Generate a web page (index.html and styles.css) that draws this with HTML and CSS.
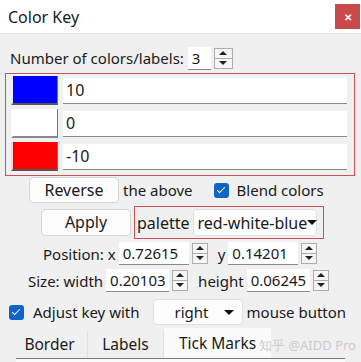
FILE: index.html
```html
<!DOCTYPE html>
<html lang="en">
<head>
    <meta charset="UTF-8">
    <title>Color Key</title>
    <link rel="stylesheet" href="styles.css">
</head>
<body>
    <div class="titlebar">
        <span class="title">Color Key</span>
        <span class="close">&#x2715;</span>
    </div>

    <div class="panel">
        <div class="row count-row">
            <span>Number of colors/labels:</span>
            <span class="spin">
                <span class="field narrow">3</span>
                <span class="arrows big"><i class="up"></i><i class="down"></i></span>
            </span>
        </div>

        <div class="colors">
            <div class="color-row">
                <span class="swatch blue"></span>
                <span class="label-field">10</span>
            </div>
            <div class="color-row">
                <span class="swatch white"></span>
                <span class="label-field">0</span>
            </div>
            <div class="color-row">
                <span class="swatch red"></span>
                <span class="label-field">-10</span>
            </div>
        </div>

        <div class="row reverse-row">
            <span class="button reverse">Reverse</span>
            <span>the above</span>
            <span class="check"></span>
            <span>Blend colors</span>
        </div>

        <div class="row apply-row">
            <span class="button apply">Apply</span>
            <span class="palette">
                <span>palette</span>
                <span class="combo palette-combo">red-white-blue<b class="caret"></b></span>
            </span>
        </div>

        <div class="row pos-row">
            <span>Position: x</span>
            <span class="spin">
                <span class="field">0.72615</span>
                <span class="arrows"><i class="up"></i><i class="down"></i></span>
            </span>
            <span class="gap-label">y</span>
            <span class="spin">
                <span class="field">0.14201</span>
                <span class="arrows"><i class="up"></i><i class="down"></i></span>
            </span>
        </div>

        <div class="row size-row">
            <span>Size: width</span>
            <span class="spin">
                <span class="field">0.20103</span>
                <span class="arrows"><i class="up"></i><i class="down"></i></span>
            </span>
            <span class="gap-label">height</span>
            <span class="spin">
                <span class="field">0.06245</span>
                <span class="arrows"><i class="up"></i><i class="down"></i></span>
            </span>
        </div>

        <div class="row adjust-row">
            <span class="check"></span>
            <span>Adjust key with</span>
            <span class="combo mouse-combo">right<b class="caret"></b></span>
            <span>mouse button</span>
        </div>

        <div class="tabs">
            <span class="tab">Border</span>
            <span class="tab">Labels</span>
            <span class="tab active">Tick Marks</span>
            <span class="watermark">知乎 @AIDD Pro</span>
        </div>
        <div class="tab-body"></div>
    </div>
</body>
</html>
```

FILE: styles.css
```css
body {
    margin: 0;
    width: 361px;
    height: 362px;
    overflow: hidden;
    background-color: #f0f0f0;
    font-family: "Noto Sans", "Open Sans", sans-serif;
    font-size: 15px;
    color: #1a1a1a;
}
.titlebar {
    height: 33px;
    background-color: #fff;
    border-bottom: 1px solid #e4e4e4;
    display: flex;
    align-items: center;
    justify-content: space-between;
    padding-left: 8px;
}
.title {
    font-size: 16px;
}
.close {
    width: 25px;
    height: 25px;
    margin-right: 1px;
    background-color: #c94a4b;
    color: #fff;
    font-size: 10px;
    font-weight: bold;
    display: flex;
    align-items: center;
    justify-content: center;
}
.panel {
    padding: 12px 6px 0 5px;
}
.row {
    display: flex;
    align-items: center;
    white-space: nowrap;
}
.count-row {
    height: 24px;
    padding-left: 5px;
    gap: 4px;
}
.spin {
    display: flex;
    align-items: center;
}
.field {
    background-color: #fff;
    border-bottom: 1px solid #8a8a8a;
    height: 22px;
    line-height: 22px;
    padding: 0 4px;
    width: 62px;
}
.field.narrow {
    width: 15px;
}
.arrows {
    display: flex;
    flex-direction: column;
    margin-left: 3px;
    border: 1px solid #adadad;
    background-color: #f5f5f5;
}
.arrows i {
    width: 14px;
    height: 9px;
    position: relative;
}
.arrows.big i {
    width: 17px;
}
.arrows i.up {
    border-bottom: 1px solid #adadad;
}
.arrows i::after {
    content: "";
    position: absolute;
    left: 3px;
    top: 2px;
    border-left: 4px solid transparent;
    border-right: 4px solid transparent;
}
.arrows.big i::after {
    left: 4px;
}
.arrows i.up::after {
    border-bottom: 4px solid #222;
}
.arrows i.down::after {
    border-top: 4px solid #222;
}
.colors {
    margin-top: 3px;
    border: 1px solid #d0505a;
    padding: 0 7px 2px 5px;
}
.color-row {
    display: flex;
    align-items: center;
    gap: 5px;
    height: 33px;
}
.swatch {
    width: 47px;
    height: 29px;
    box-sizing: border-box;
    border-left: 2px solid #e8e8ff;
    border-bottom: 2px solid #555;
    border-right: 1px solid #777;
}
.swatch.blue {
    background-color: #0000ff;
}
.swatch.white {
    background-color: #fff;
    border-left-color: #fff;
    border-bottom: 2px solid #888;
}
.swatch.red {
    background-color: #ff0000;
    border-left-color: #ffd0d0;
}
.label-field {
    flex: 1;
    height: 25px;
    line-height: 25px;
    background-color: #fff;
    border-bottom: 1px solid #8a8a8a;
    padding-left: 3px;
    font-size: 16px;
}
.reverse-row {
    height: 28px;
    padding-left: 24px;
}
.button {
    background-color: #fdfdfd;
    border: 1px solid #d6d6d6;
    border-radius: 4px;
    height: 24px;
    line-height: 24px;
    text-align: center;
    font-size: 16px;
}
.button.reverse {
    width: 88px;
    margin-right: 4px;
}
.check {
    width: 15px;
    height: 15px;
    border-radius: 3px;
    background-color: #0f64c8;
    position: relative;
    margin: 0 8px 0 21px;
}
.check::after {
    content: "";
    position: absolute;
    left: 5px;
    top: 2px;
    width: 3px;
    height: 7px;
    border-right: 1.5px solid #fff;
    border-bottom: 1.5px solid #fff;
    transform: rotate(45deg);
}
.apply-row {
    margin-top: 1px;
    padding-left: 36px;
    height: 35px;
}
.button.apply {
    width: 88px;
    height: 25px;
    line-height: 25px;
    margin-right: 3px;
}
.palette {
    display: flex;
    align-items: center;
    border: 1px solid #d0505a;
    height: 31px;
    padding: 0 6px 0 2px;
    gap: 3px;
    font-size: 16px;
}
.combo {
    background-color: #fdfdfd;
    border: 1px solid #e0e0e0;
    border-radius: 4px;
    display: flex;
    align-items: center;
    font-size: 16px;
}
.palette-combo {
    height: 25px;
    padding: 0 4px;
    width: 114px;
}
.caret {
    margin-left: auto;
    border-left: 5px solid transparent;
    border-right: 5px solid transparent;
    border-top: 5px solid #111;
}
.pos-row {
    height: 27px;
    padding-left: 38px;
    gap: 3px;
}
.gap-label {
    margin-left: 7px;
}
.size-row {
    height: 27px;
    padding-left: 23px;
    gap: 3px;
}
.size-row .field {
    width: 55px;
}
.adjust-row {
    margin-top: 4px;
    height: 28px;
    padding-left: 4px;
}
.adjust-row .check {
    margin: 0 9px 0 0;
}
.mouse-combo {
    width: 90px;
    height: 26px;
    padding: 0 8px 0 21px;
    box-sizing: border-box;
    margin: 0 4px 0 13px;
    font-size: 15px;
}
.tabs {
    margin-top: 2px;
    display: flex;
    align-items: flex-end;
    padding-left: 7px;
    height: 30px;
    position: relative;
}
.tab {
    width: 75px;
    height: 27px;
    line-height: 27px;
    text-align: center;
    border-right: 1px solid #e2e2e2;
    background-color: #f0f0f0;
    font-size: 15.5px;
}
.tab.active {
    width: 107px;
    height: 30px;
    line-height: 30px;
    background-color: #fafafa;
    border: none;
}
.watermark {
    position: absolute;
    left: 254px;
    top: 8px;
    color: #cacaca;
    font-size: 13px;
    white-space: nowrap;
}
.tab-body {
    margin-left: 11px;
    margin-right: 10px;
    border-top: 1px solid #777;
    height: 4px;
    background-color: #fafafa;
}
```
